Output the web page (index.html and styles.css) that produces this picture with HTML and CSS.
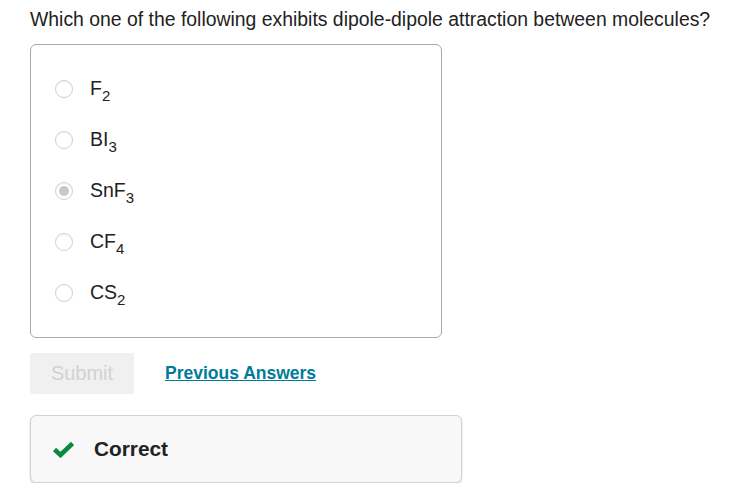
FILE: index.html
```html
<!DOCTYPE html>
<html lang="en">
<head>
    <meta charset="UTF-8">
    <title>Question</title>
    <link rel="stylesheet" href="styles.css">
</head>
<body>
    <div class="question">
        <p class="prompt">Which one of the following exhibits dipole-dipole attraction between molecules?</p>

        <div class="choices">
            <label class="choice"><span class="radio"></span><span>F<sub>2</sub></span></label>
            <label class="choice"><span class="radio"></span><span>BI<sub>3</sub></span></label>
            <label class="choice"><span class="radio checked"></span><span>SnF<sub>3</sub></span></label>
            <label class="choice"><span class="radio"></span><span>CF<sub>4</sub></span></label>
            <label class="choice"><span class="radio"></span><span>CS<sub>2</sub></span></label>
        </div>

        <div class="actions">
            <button class="btn-submit" disabled>Submit</button>
            <a href="#" class="prev-link">Previous Answers</a>
        </div>

        <div class="feedback">
            <svg class="check" width="21" height="17" viewBox="0 0 21 17">
                <path d="M1.5 8.5 L7.5 14 L19.5 2.5" fill="none" stroke="#0b8a3f" stroke-width="4.6"/>
            </svg>
            <span class="feedback-text">Correct</span>
        </div>
    </div>
</body>
</html>
```

FILE: styles.css
```css
body {
    margin: 0;
    padding: 0 30px;
    font-family: "Liberation Sans", Arial, sans-serif;
    color: #222;
    background-color: white;
}
.prompt {
    margin: 0;
    padding-top: 8px;
    font-size: 19.4px;
    line-height: 22px;
    color: #222;
    white-space: nowrap;
}
.choices {
    box-sizing: border-box;
    width: 412px;
    height: 294px;
    margin-top: 14px;
    border: 1px solid #aaa;
    border-radius: 6px;
    padding: 18px 0 0 24px;
}
.choice {
    display: flex;
    align-items: center;
    height: 51px;
    font-size: 19.5px;
    color: #222;
}
.choice sub {
    font-size: 15px;
    vertical-align: -6px;
    line-height: 0;
}
.radio {
    width: 16px;
    height: 16px;
    border: 1px solid #d0d0d0;
    border-radius: 50%;
    margin-right: 17px;
    background: white;
    box-shadow: inset 0 1px 1px rgba(0, 0, 0, 0.05);
    display: flex;
    align-items: center;
    justify-content: center;
}
.radio.checked::after {
    content: "";
    width: 10px;
    height: 10px;
    border-radius: 50%;
    background-color: #c8c8c8;
}
.actions {
    display: flex;
    align-items: center;
    margin-top: 15px;
}
.btn-submit {
    width: 104px;
    height: 41px;
    border: none;
    border-radius: 3px;
    background-color: #f0f0f0;
    color: #d2d2d2;
    font-family: "Liberation Sans", Arial, sans-serif;
    font-size: 20px;
}
.prev-link {
    margin-left: 31px;
    color: #007c99;
    font-weight: bold;
    font-size: 17.5px;
}
.feedback {
    display: flex;
    align-items: center;
    width: 432px;
    height: 68px;
    box-sizing: border-box;
    margin-top: 21px;
    padding-left: 22px;
    background-color: #f8f8f8;
    border: 1px solid #d2d2d2;
    border-radius: 6px;
    box-shadow: 0 1px 2px rgba(0, 0, 0, 0.18);
}
.check {
    margin-right: 20px;
}
.feedback-text {
    font-size: 20.8px;
    font-weight: bold;
    color: #222;
}
```
